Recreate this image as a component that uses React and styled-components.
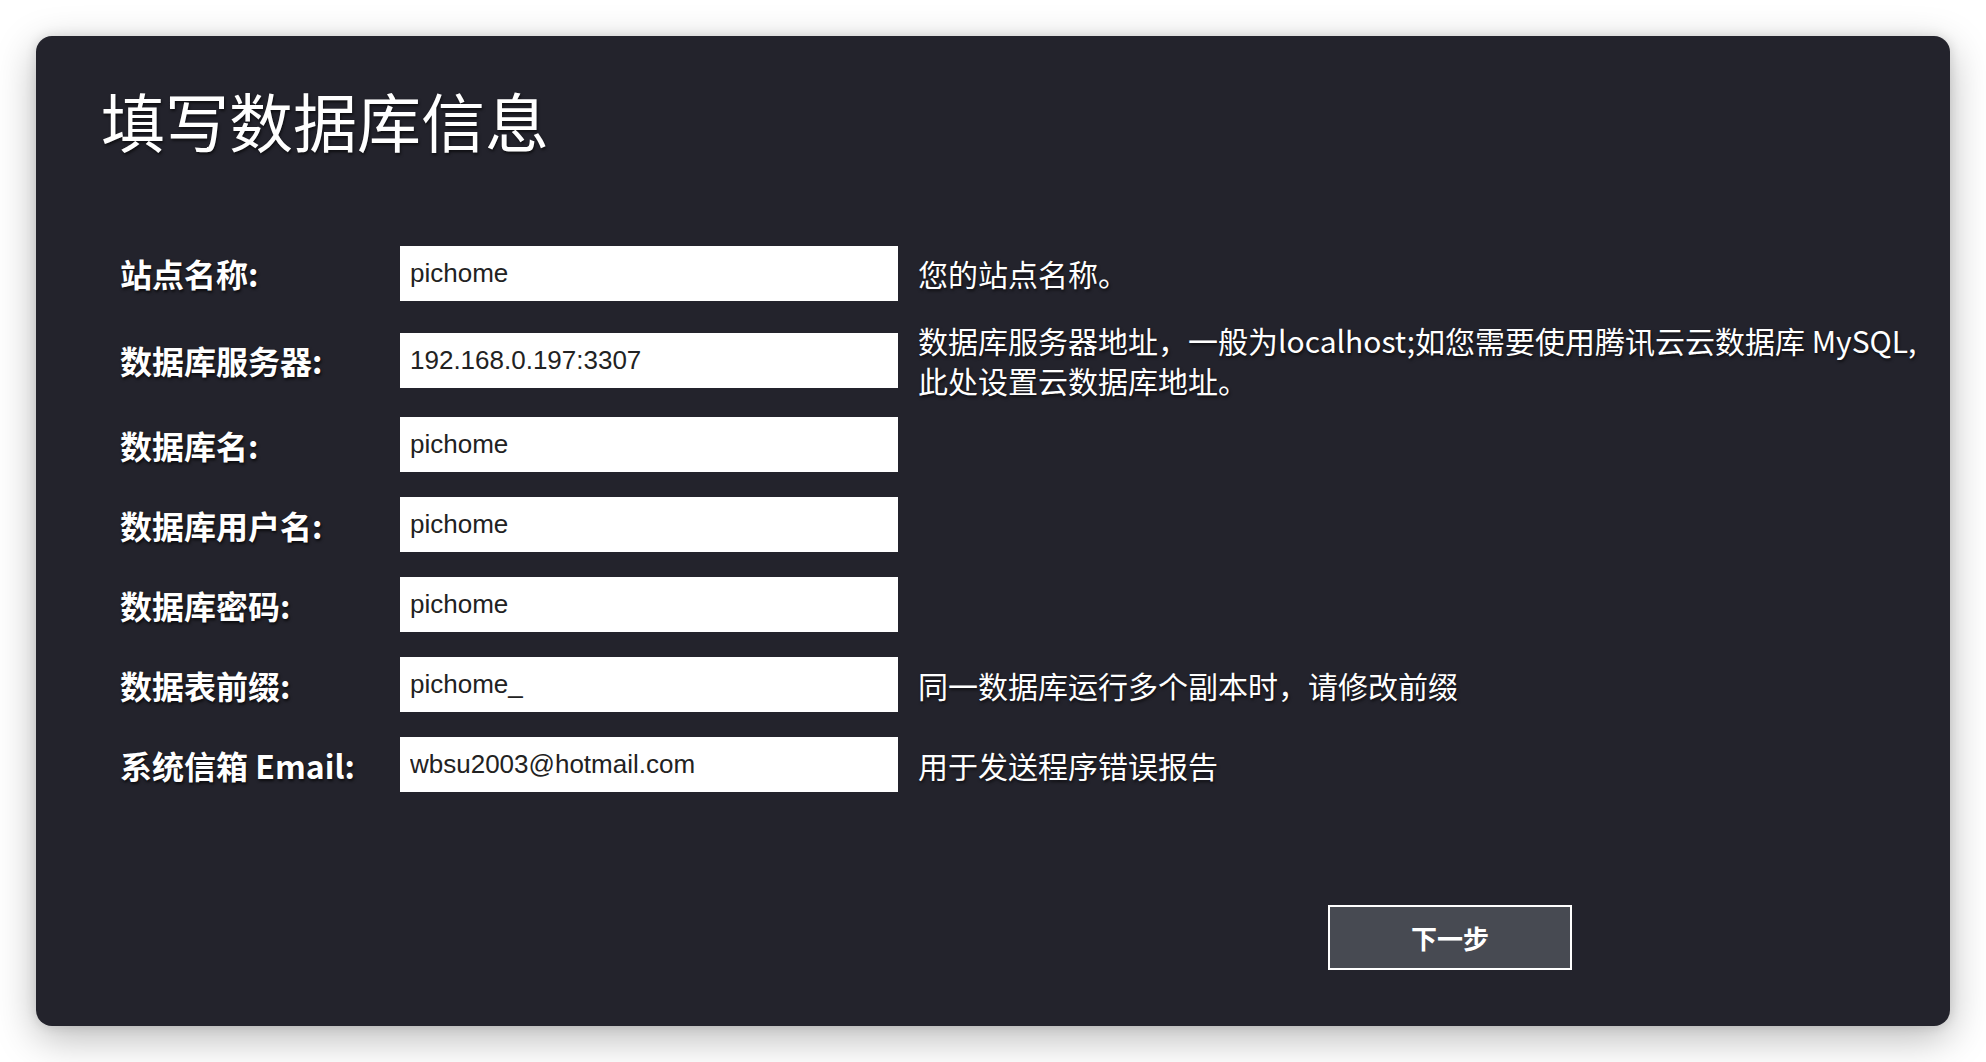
import React from 'react';
import styled, { createGlobalStyle } from 'styled-components';

const GlobalStyle = createGlobalStyle`
  html, body {
    margin: 0;
    padding: 0;
    background: #ffffff;
  }
  * {
    box-sizing: border-box;
  }
`;

const fieldList = [
  { id: 1, label: '站点名称:', value: 'pichome', desc: ['您的站点名称。'], rowHeight: 86 },
  {
    id: 2,
    label: '数据库服务器:',
    value: '192.168.0.197:3307',
    desc: ['数据库服务器地址，一般为localhost;如您需要使用腾讯云云数据库 MySQL,', '此处设置云数据库地址。'],
    rowHeight: 88.5,
  },
  { id: 3, label: '数据库名:', value: 'pichome', desc: [] },
  { id: 4, label: '数据库用户名:', value: 'pichome', desc: [] },
  { id: 5, label: '数据库密码:', value: 'pichome', desc: [] },
  { id: 6, label: '数据表前缀:', value: 'pichome_', desc: ['同一数据库运行多个副本时，请修改前缀'] },
  { id: 7, label: '系统信箱 Email:', value: 'wbsu2003@hotmail.com', desc: ['用于发送程序错误报告'] },
];

const PageWrapper = styled.div`
  width: 100%;
  height: 1062px;
  padding: 36px 36px 36px 36px;
  font-family: "Noto Sans CJK SC", "Noto Sans", sans-serif;
`;

const MainPanel = styled.div`
  width: 1914px;
  height: 990px;
  background: #23232c;
  border-radius: 16px;
  box-shadow: 0 12px 40px rgba(0, 0, 0, 0.28), 0 0 12px rgba(0, 0, 0, 0.12);
  padding: 45px 0 0 65px;
  display: flex;
  flex-direction: column;
`;

const Title = styled.h1`
  margin: 0;
  font-size: 64px;
  font-weight: 400;
  line-height: 77px;
  color: #ffffff;
  text-shadow: 1px 2px 3px rgba(0, 0, 0, 0.6);
`;

const FormTable = styled.div`
  margin: 72px 0 0 19px;
  display: flex;
  flex-direction: column;
`;

const FormRow = styled.div`
  display: flex;
  align-items: center;
  height: ${(p) => p.$h || 80}px;
`;

const FieldLabel = styled.label`
  width: 280px;
  flex-shrink: 0;
  font-size: 32px;
  font-weight: 700;
  color: #ffffff;
  text-shadow: 1px 2px 3px rgba(0, 0, 0, 0.7);
`;

const TextInput = styled.input`
  width: 498px;
  height: 55px;
  flex-shrink: 0;
  border: none;
  outline: none;
  margin: 0;
  padding: 0 10px;
  background: #ffffff;
  color: #222222;
  font-family: "Liberation Sans", Arial, sans-serif;
  font-size: 26px;
`;

const FieldDesc = styled.div`
  margin-left: 20px;
  font-size: 30px;
  line-height: 40px;
  color: #ffffff;
  white-space: nowrap;
  text-shadow: 1px 2px 3px rgba(0, 0, 0, 0.6);
`;

const FooterBar = styled.div`
  margin-top: 100px;
  padding-left: 1227px;
  display: flex;
`;

const NextButton = styled.button`
  width: 244px;
  height: 65px;
  background: #474a52;
  border: 2px solid #ffffff;
  color: #ffffff;
  font-family: "Noto Sans CJK SC", sans-serif;
  font-size: 26px;
  font-weight: 700;
  cursor: pointer;
`;

const App = () => {
  return (
    <>
      <GlobalStyle />
      <PageWrapper>
        <MainPanel>
          <Title>填写数据库信息</Title>
          <FormTable>
            {fieldList.map((field) => {
              return (
                <FormRow key={field.id} $h={field.rowHeight}>
                  <FieldLabel>{field.label}</FieldLabel>
                  <TextInput type='text' defaultValue={field.value} />
                  {field.desc.length > 0 && (
                    <FieldDesc>
                      {field.desc.map((line, idx) => (
                        <div key={idx}>{line}</div>
                      ))}
                    </FieldDesc>
                  )}
                </FormRow>
              );
            })}
          </FormTable>
          <FooterBar>
            <NextButton>下一步</NextButton>
          </FooterBar>
        </MainPanel>
      </PageWrapper>
    </>
  );
};

export default App;
